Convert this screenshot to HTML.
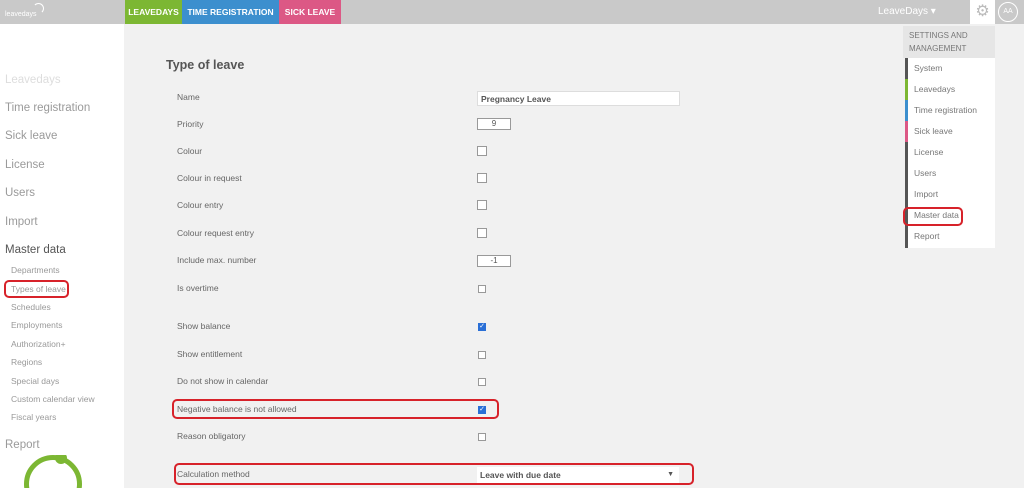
<!DOCTYPE html><html style="width:1024px;height:488px;overflow:hidden"><head><style>
*{margin:0;padding:0;box-sizing:border-box}
body{width:1024px;height:488px;overflow:hidden;background:#f1f1f1;font-family:"Liberation Sans",sans-serif;position:relative}
.a{position:absolute;white-space:nowrap}
.top{left:0;top:0;width:1024px;height:24px;background:#c9c9c9}
.tab{top:0;height:24px;color:#fff;font-size:8.5px;line-height:24px;text-align:center;font-weight:bold}
.side{left:0;top:24px;width:124px;height:464px;background:#fff}
.s1{left:5px;font-size:11.5px;color:#9a9a9a}
.s2{left:11px;font-size:8.5px;color:#999}
.lb{left:177px;font-size:8.5px;color:#666}
.cb{left:477px;width:10px;height:10px;border:1px solid #999;background:#fff}
.cs{left:478px;width:8px;height:8px;border:1px solid #999;background:#fff}
.ck{background:#2a6fd6;border-color:#2a6fd6;color:#fff;font-size:7px;line-height:6px;text-align:center}
.mi{left:905px;width:90px;height:21px;background:#fff;font-size:8.5px;color:#777;line-height:21px;padding-left:6px;border-left:3px solid #555}
.red{border:2px solid #d7222a;border-radius:5px}
</style></head><body>
<div class="a top"></div>
<div class="a" style="left:5px;top:11px;font-size:7px;color:#fff">leavedays</div>
<div class="a" style="left:33px;top:3px;width:11px;height:11px;border:1.5px solid #fff;border-radius:50%;border-left-color:transparent;border-bottom-color:transparent"></div>
<div class="a tab" style="left:125px;width:57px;background:#7cb733">LEAVEDAYS</div>
<div class="a tab" style="left:182px;width:97px;background:#3c8fce">TIME REGISTRATION</div>
<div class="a tab" style="left:279px;width:62px;background:#dc5885">SICK LEAVE</div>
<div class="a" style="left:878px;top:6px;font-size:10px;color:#fff">LeaveDays ▾</div>
<div class="a" style="left:970px;top:0;width:25px;height:24px;background:#fff;color:#bbb;font-size:16px;text-align:center;line-height:24px">⚙</div>
<div class="a" style="left:998px;top:2px;width:20px;height:20px;border:1.5px solid #fff;border-radius:50%;color:#fff;font-size:7px;text-align:center;line-height:17px">AA</div>
<div class="a side"></div>
<div class="a s1" style="top:74px;color:#ddd">Leavedays</div>
<div class="a s1" style="top:102px">Time registration</div>
<div class="a s1" style="top:130px">Sick leave</div>
<div class="a s1" style="top:159px">License</div>
<div class="a s1" style="top:187px">Users</div>
<div class="a s1" style="top:216px">Import</div>
<div class="a s1" style="top:244px;color:#555">Master data</div>
<div class="a s2" style="top:265px">Departments</div>
<div class="a s2" style="top:284px">Types of leave</div>
<div class="a red" style="left:4px;top:280px;width:65px;height:18px"></div>
<div class="a s2" style="top:302px">Schedules</div>
<div class="a s2" style="top:320px">Employments</div>
<div class="a s2" style="top:339px">Authorization+</div>
<div class="a s2" style="top:357px">Regions</div>
<div class="a s2" style="top:376px">Special days</div>
<div class="a s2" style="top:394px">Custom calendar view</div>
<div class="a s2" style="top:412px">Fiscal years</div>
<div class="a s1" style="top:439px">Report</div>
<div class="a" style="left:0;top:455px;width:124px;height:33px;overflow:hidden">
<div class="a" style="left:24px;top:0;width:58px;height:58px;border:5px solid #7cb733;border-radius:50%"></div>
<div class="a" style="left:55px;top:-3px;width:12px;height:12px;background:#7cb733;border-radius:50%"></div>
</div>
<div class="a" style="left:166px;top:58px;font-size:12.5px;font-weight:bold;color:#555">Type of leave</div>
<div class="a lb" style="top:92px">Name</div>
<div class="a" style="left:477px;top:91px;width:203px;height:15px;background:#fff;border:1px solid #ddd;font-size:8.5px;font-weight:bold;color:#555;padding:2px 3px">Pregnancy Leave</div>
<div class="a lb" style="top:119px">Priority</div>
<div class="a" style="left:477px;top:118px;width:34px;height:12px;background:#fff;border:1px solid #999;font-size:8px;color:#555;text-align:center;line-height:10px">9</div>
<div class="a lb" style="top:146px">Colour</div><div class="a cb" style="top:146px"></div>
<div class="a lb" style="top:173px">Colour in request</div><div class="a cb" style="top:173px"></div>
<div class="a lb" style="top:200px">Colour entry</div><div class="a cb" style="top:200px"></div>
<div class="a lb" style="top:228px">Colour request entry</div><div class="a cb" style="top:228px"></div>
<div class="a lb" style="top:255px">Include max. number</div>
<div class="a" style="left:477px;top:255px;width:34px;height:12px;background:#fff;border:1px solid #999;font-size:8px;color:#555;text-align:center;line-height:10px">-1</div>
<div class="a lb" style="top:283px">Is overtime</div><div class="a cs" style="top:285px"></div>
<div class="a lb" style="top:321px">Show balance</div><div class="a cs ck" style="top:323px">✓</div>
<div class="a lb" style="top:349px">Show entitlement</div><div class="a cs" style="top:351px"></div>
<div class="a lb" style="top:376px">Do not show in calendar</div><div class="a cs" style="top:378px"></div>
<div class="a lb" style="top:404px">Negative balance is not allowed</div><div class="a cs ck" style="top:406px">✓</div>
<div class="a red" style="left:172px;top:399px;width:327px;height:20px"></div>
<div class="a lb" style="top:431px">Reason obligatory</div><div class="a cs" style="top:433px"></div>
<div class="a lb" style="top:469px">Calculation method</div>
<div class="a" style="left:477px;top:467px;width:202px;height:16px;background:#fff;font-size:8.5px;font-weight:bold;color:#555;padding:3px 3px">Leave with due date<span style="position:absolute;right:5px;top:4px;font-size:7px">▼</span></div>
<div class="a red" style="left:174px;top:463px;width:520px;height:22px"></div>
<div class="a" style="left:903px;top:26px;width:92px;height:32px;background:#e6e6e6;font-size:8px;color:#777;padding:3px 6px;line-height:13px">SETTINGS AND<br>MANAGEMENT</div>
<div class="a mi" style="top:58px">System</div>
<div class="a mi" style="top:79px;border-left-color:#7cb733">Leavedays</div>
<div class="a mi" style="top:100px;border-left-color:#3c8fce">Time registration</div>
<div class="a mi" style="top:121px;border-left-color:#dc5885">Sick leave</div>
<div class="a mi" style="top:142px">License</div>
<div class="a mi" style="top:163px">Users</div>
<div class="a mi" style="top:184px">Import</div>
<div class="a mi" style="top:205px">Master data</div>
<div class="a mi" style="top:226px;height:22px">Report</div>
<div class="a red" style="left:903px;top:207px;width:60px;height:19px"></div>
</body></html>
